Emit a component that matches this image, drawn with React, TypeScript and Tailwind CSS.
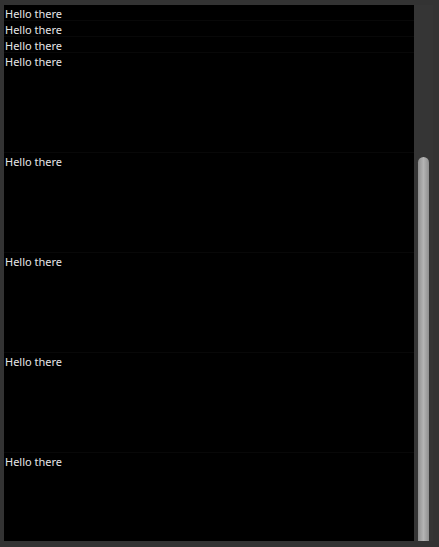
import React from "react";

const heights = [16, 16, 16, 100, 100, 100, 100, 100];

export default function App() {
  return (
    <div
      className="w-[439px] h-[547px] bg-[#333333] flex pl-[4px] pt-[5px] overflow-hidden"
      style={{ fontFamily: '"Noto Sans", "Open Sans", sans-serif' }}
    >
      <div className="w-[410px] h-[536px] bg-black overflow-hidden flex flex-col shrink-0">
        {heights.map((h, i) => (
          <div
            key={i}
            className={`shrink-0 border-b border-[#080808] pl-[1px] text-[11px] leading-[17px] text-[#e6e6e6] ${
              h === 16 ? "h-[16px]" : "h-[100px]"
            }`}
          >
            Hello there
          </div>
        ))}
      </div>
      <div className="w-[19px] h-[536px] bg-[#353535] flex justify-center pt-[152px] shrink-0">
        <div className="w-[11px] h-[384px] rounded-t-full bg-gradient-to-r from-[#8f8f8f] via-[#b4b4b4] to-[#8f8f8f]" />
      </div>
    </div>
  );
}
